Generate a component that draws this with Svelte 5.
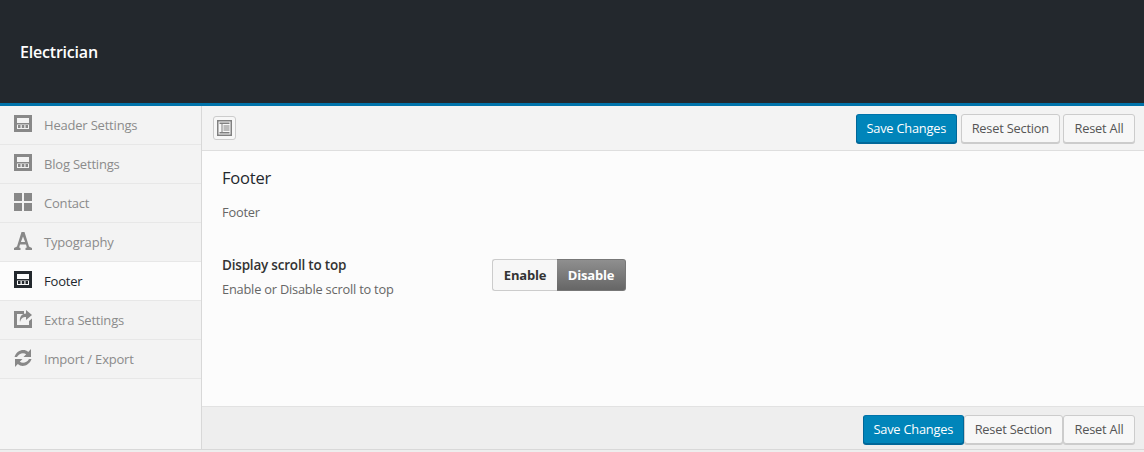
<script lang="ts">
  type MenuItem = { label: string; icon: string; active?: boolean };

  const menu: MenuItem[] = [
    { label: "Header Settings", icon: "layout" },
    { label: "Blog Settings", icon: "layout" },
    { label: "Contact", icon: "grid" },
    { label: "Typography", icon: "type" },
    { label: "Footer", icon: "layout", active: true },
    { label: "Extra Settings", icon: "share" },
    { label: "Import / Export", icon: "refresh" },
  ];
</script>

{#snippet actions()}
  <button class="btn primary">Save Changes</button>
  <button class="btn">Reset Section</button>
  <button class="btn last">Reset All</button>
{/snippet}

<div class="page">
  <header class="top">
    <h1>Electrician</h1>
  </header>

  <div class="panel">
    <nav class="sidebar">
      <ul>
        {#each menu as item}
          <li class:active={item.active}>
            <svg class="icon" viewBox="0 0 18 18" aria-hidden="true">
              {#if item.icon === "layout"}
                <path fill-rule="evenodd" d="M0 0h18v17H0zM3 3v11h12V3z" />
                <path d="M3 8h12v1.500H3zM4 10h2.500v3H4zM7.800 10h2.500v3H7.800zM11.500 10H14v3h-2.500z" />
              {:else if item.icon === "grid"}
                <path d="M0 0h8v8H0zM10 0h8v8h-8zM0 10h8v8H0zM10 10h8v8h-8z" />
              {:else if item.icon === "type"}
                <path fill-rule="evenodd" d="M7.500 0h3L15 14.500l3 1.500v2h-6.500v-2l1.300-.6-.8-2.900H6l-.8 2.900 1.300.6v2H0v-2l3-1.500zM9 4.500 6.900 10h4.200z" />
              {:else if item.icon === "share"}
                <path d="M0 1h10v3H3v11h12v-4l3-2.500V18H0z" />
                <path d="M12 0l6 5-6 5V7C9 7 7 8 6 12c-.8-5 1.500-8 6-8.500z" />
              {:else}
                <path d="M17 0v8h-7.500l2.700-2.700C9.500 3.200 5 4.200 3 8H.5C2.500 1.500 10-1 14.200 3z" />
                <path d="M1 18v-8h7.500l-2.700 2.700c2.700 2.100 7.200 1.100 9.200-2.700h2.500c-2 6.500-9.500 9-13.700 5z" />
              {/if}
            </svg>
            <span>{item.label}</span>
          </li>
        {/each}
      </ul>
    </nav>

    <main class="main">
      <div class="toolbar">
        <button class="expand" aria-label="Expand">
          <svg viewBox="0 0 15 16" aria-hidden="true">
            <path fill-rule="evenodd" d="M0 0h15v16H0zM1.500 1.500v13h12v-13z" />
            <path d="M2.500 2.500h10v1.500h-10zM2.500 12h10v1.500h-10zM4.500 4h1v8h-1z" />
            <path d="M6.500 5h6v6h-6z" opacity=".5" />
          </svg>
        </button>
        <div class="actions">{@render actions()}</div>
      </div>

      <section class="content">
        <h2>Footer</h2>
        <p class="section-desc">Footer</p>
        <div class="field">
          <div class="field-label">
            <strong>Display scroll to top</strong>
            <small>Enable or Disable scroll to top</small>
          </div>
          <div class="switch">
            <span class="on">Enable</span>
            <span class="off">Disable</span>
          </div>
        </div>
      </section>

      <div class="bottombar">
        <div class="actions tight">{@render actions()}</div>
      </div>
    </main>
  </div>
</div>

<style>
  :global(body) {
    margin: 0;
    background: #eee;
  }

  .page {
    width: 1144px;
    height: 452px;
    overflow: hidden;
    font-family: "Open Sans", "Noto Sans", sans-serif;
    font-size: 12.8px;
    letter-spacing: -0.2px;
    color: #444;
  }

  .top {
    height: 103px;
    background: #23282d;
    border-bottom: 3px solid #0073aa;
    display: flex;
    align-items: center;
    padding-left: 20px;
  }

  h1 {
    margin: 0;
    font-size: 16px;
    font-weight: 600;
    color: #fff;
  }

  .panel {
    display: flex;
    height: 343px;
    border-bottom: 1px solid #d8d8d8;
  }

  .sidebar {
    width: 201px;
    flex: none;
    background: #f5f5f5;
    border-right: 1px solid #d8d8d8;
  }

  ul {
    list-style: none;
    margin: 0;
    padding: 0;
  }

  li {
    height: 38px;
    border-bottom: 1px solid #e7e7e7;
    display: flex;
    align-items: center;
    gap: 12px;
    padding-left: 14px;
    color: #8b8b8b;
    font-size: 13px;
    font-weight: 500;
    background: #f3f3f3;
  }

  li.active {
    background: #fcfcfc;
    color: #23282d;
  }

  .icon {
    width: 18px;
    height: 18px;
    fill: #888;
    flex: none;
    margin-top: -2px;
  }

  li.active .icon {
    fill: #23282d;
  }

  .main {
    flex: 1;
    display: flex;
    flex-direction: column;
    min-width: 0;
    background: #fcfcfc;
  }

  .toolbar {
    height: 44px;
    background: #f3f3f3;
    border-bottom: 1px solid #dedede;
    display: flex;
    align-items: center;
    justify-content: space-between;
    padding: 0 9px 0 11px;
    flex: none;
  }

  .expand {
    width: 23px;
    height: 24px;
    padding: 0;
    background: #f7f7f7;
    border: 1px solid #ccc;
    border-radius: 3px;
    display: flex;
    align-items: center;
    justify-content: center;
  }

  .expand svg {
    width: 15px;
    height: 16px;
    fill: #808080;
  }

  .actions {
    display: flex;
    gap: 4px;
  }

  .actions.tight {
    gap: 0;
  }

  .btn {
    height: 29px;
    padding: 0 10px;
    font: inherit;
    letter-spacing: inherit;
    color: #555;
    background: #f7f7f7;
    border: 1px solid #ccc;
    border-radius: 3px;
    box-shadow: 0 1px 0 #ccc;
  }

  .btn.last {
    padding: 0 10.5px;
  }

  .actions:not(.tight) .btn.last {
    margin-left: -1px;
  }

  .btn.primary {
    padding: 0 9.5px;
    background: #0085ba;
    border-color: #0073aa #006799 #006799;
    color: #fff;
    box-shadow: 0 1px 0 #006799;
  }

  .content {
    flex: 1;
    padding: 17px 20px 0;
  }

  h2 {
    margin: 0;
    font-size: 16.500px;
    font-weight: 500;
    line-height: 20px;
    color: #23282d;
  }

  .section-desc {
    margin: 15px 0 0;
    line-height: 18px;
    color: #666;
  }

  .field {
    display: flex;
    align-items: flex-start;
    margin-top: 35px;
  }

  .field-label {
    width: 270px;
    display: flex;
    flex-direction: column;
    gap: 6px;
  }

  strong {
    font-weight: 600;
    font-size: 13.500px;
    line-height: 18px;
    color: #333;
  }

  small {
    font-size: 12.800px;
    line-height: 18px;
    color: #666;
  }

  .switch {
    display: flex;
    height: 32px;
    margin-top: 3px;
    font-weight: 700;
    font-size: 13px;
    line-height: 30px;
    text-align: center;
  }

  .switch span {
    display: block;
  }

  .on {
    width: 64px;
    background: #f7f7f7;
    color: #333;
    border: 1px solid #ccc;
    border-right: 0;
    border-radius: 3px 0 0 3px;
  }

  .off {
    width: 68px;
    background: linear-gradient(#8f8f8f, #666);
    color: #fff;
    border: 1px solid #777;
    border-left: 0;
    border-radius: 0 3px 3px 0;
  }

  .bottombar {
    height: 43px;
    box-sizing: border-box;
    flex: none;
    background: #eee;
    border-top: 1px solid #e2e2e2;
    display: flex;
    align-items: center;
    justify-content: flex-end;
    padding-right: 9px;
    padding-top: 2px;
  }
</style>
